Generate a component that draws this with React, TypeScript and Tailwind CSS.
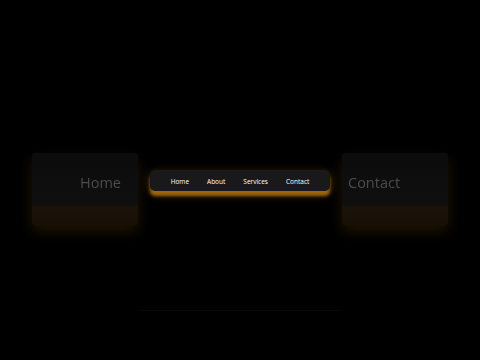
const links = ["Home", "About", "Services", "Contact"];

const SidePanel = ({ label, side }: { label: string; side: "left" | "right" }) => (
  <div
    className={`relative flex h-[72px] w-[106px] overflow-hidden rounded-[3px] shadow-[0_6px_14px_rgba(150,95,10,0.22)] ${
      side === "left" ? "justify-end pr-[17px]" : "justify-start pl-[6px]"
    }`}
    style={{ background: "linear-gradient(to bottom, #0c0c0d 0%, #0f0f10 72%, #1b1308 75%, #181006 100%)" }}
  >
    <span className="mt-[23px] font-['Open_Sans',sans-serif] text-[14.5px] leading-none text-[#4c4c4e] blur-[0.4px]">
      {label}
    </span>
  </div>
);

export default function App() {
  return (
    <div className="flex h-[360px] w-[480px] flex-col items-center bg-black">
      <div className="mt-[153px] flex items-start gap-[12px]">
        <SidePanel label="Home" side="left" />
        <nav className="mt-[17px] flex h-[21px] w-[180px] items-center justify-center gap-[18px] rounded-[5px] bg-[#19191b] pt-[3px] shadow-[0_5px_3px_rgba(200,130,15,0.7),0_3px_10px_rgba(220,140,20,0.4)]">
          {links.map((l) => (
            <a key={l} className="font-['Open_Sans',sans-serif] text-[6.5px] leading-none text-white">
              {l}
            </a>
          ))}
        </nav>
        <SidePanel label="Contact" side="right" />
      </div>
      <div className="mt-[85px] h-px w-[200px] bg-[#0a0a0a]" />
    </div>
  );
}
